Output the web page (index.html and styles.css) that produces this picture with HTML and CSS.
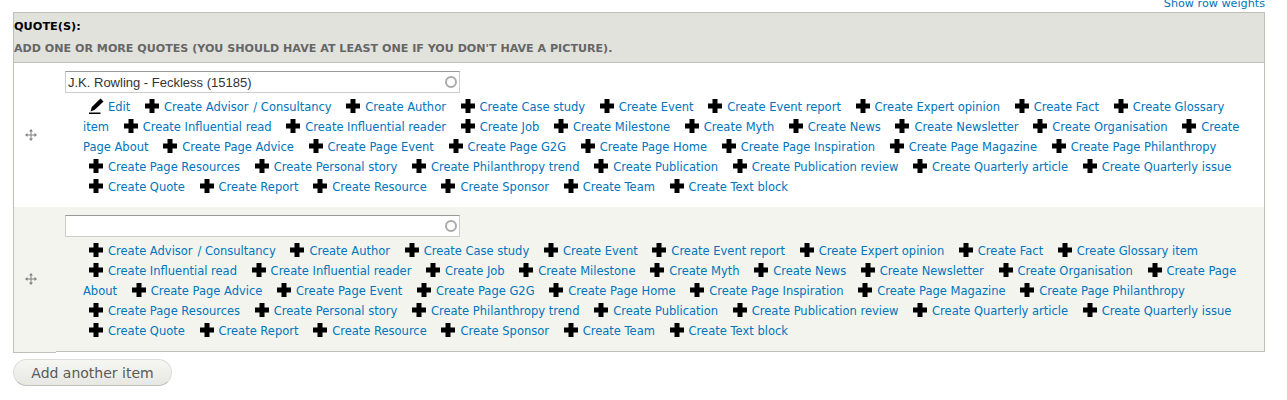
FILE: index.html
```html
<!DOCTYPE html>
<html lang="en">
<head>
<meta charset="utf-8">
<title>Quotes</title>
<link rel="stylesheet" href="styles.css">
</head>
<body>
<svg class="defs" width="0" height="0" aria-hidden="true">
  <symbol id="plus" viewBox="0 0 14 14"><path d="M4.500 0h5v4.500H14v5H9.500V14h-5V9.500H0v-5h4.500z"/></symbol>
  <symbol id="pencil" viewBox="0 0 15 16"><path d="M11.500 0.500 14.500 3.500 5.500 12 1.500 13.500 2.800 9z"/><path d="M0 14.500h11.500V16H0z"/></symbol>
  <symbol id="move" viewBox="0 0 12 12"><path d="M5.500 2.500h1v3h3V4L12 6 9.500 8V6.500h-3v3H8L6 12 4 9.500h1.500v-3h-3V8L0 6l2.500-2v1.500h3v-3H4L6 0l2 2.500z"/></symbol>
</svg>
<div class="weights"><a href="#">Show row weights</a></div>
<div class="table">
  <div class="head">
    <div class="title">Quote(s):</div>
    <div class="desc">Add one or more quotes (you should have at least one if you don't have a picture).</div>
  </div>
  <div class="row">
    <div class="handle"><svg class="move"><use href="#move"/></svg></div>
    <div class="cell">
      <div class="field">J.K. Rowling - Feckless (15185)<span class="throbber"></span></div>
      <div class="links">
        <a href="#"><span class="i"><svg class="ico pen"><use href="#pencil"/></svg>Edit</span></a>
        <a href="#"><span class="i"><svg class="ico"><use href="#plus"/></svg>Create</span> Advisor&#8202; / Consultancy</a>
        <a href="#"><span class="i"><svg class="ico"><use href="#plus"/></svg>Create</span> Author</a>
        <a href="#"><span class="i"><svg class="ico"><use href="#plus"/></svg>Create</span> Case study</a>
        <a href="#"><span class="i"><svg class="ico"><use href="#plus"/></svg>Create</span> Event</a>
        <a href="#"><span class="i"><svg class="ico"><use href="#plus"/></svg>Create</span> Event report</a>
        <a href="#"><span class="i"><svg class="ico"><use href="#plus"/></svg>Create</span> Expert opinion</a>
        <a href="#"><span class="i"><svg class="ico"><use href="#plus"/></svg>Create</span> Fact</a>
        <a href="#"><span class="i"><svg class="ico"><use href="#plus"/></svg>Create</span> Glossary item</a>
        <a href="#"><span class="i"><svg class="ico"><use href="#plus"/></svg>Create</span> Influential read</a>
        <a href="#"><span class="i"><svg class="ico"><use href="#plus"/></svg>Create</span> Influential reader</a>
        <a href="#"><span class="i"><svg class="ico"><use href="#plus"/></svg>Create</span> Job</a>
        <a href="#"><span class="i"><svg class="ico"><use href="#plus"/></svg>Create</span> Milestone</a>
        <a href="#"><span class="i"><svg class="ico"><use href="#plus"/></svg>Create</span> Myth</a>
        <a href="#"><span class="i"><svg class="ico"><use href="#plus"/></svg>Create</span> News</a>
        <a href="#"><span class="i"><svg class="ico"><use href="#plus"/></svg>Create</span> Newsletter</a>
        <a href="#"><span class="i"><svg class="ico"><use href="#plus"/></svg>Create</span> Organisation</a>
        <a href="#"><span class="i"><svg class="ico"><use href="#plus"/></svg>Create</span> Page About</a>
        <a href="#"><span class="i"><svg class="ico"><use href="#plus"/></svg>Create</span> Page Advice</a>
        <a href="#"><span class="i"><svg class="ico"><use href="#plus"/></svg>Create</span> Page Event</a>
        <a href="#"><span class="i"><svg class="ico"><use href="#plus"/></svg>Create</span> Page G2G</a>
        <a href="#"><span class="i"><svg class="ico"><use href="#plus"/></svg>Create</span> Page Home</a>
        <a href="#"><span class="i"><svg class="ico"><use href="#plus"/></svg>Create</span> Page Inspiration</a>
        <a href="#"><span class="i"><svg class="ico"><use href="#plus"/></svg>Create</span> Page Magazine</a>
        <a href="#"><span class="i"><svg class="ico"><use href="#plus"/></svg>Create</span> Page Philanthropy</a>
        <a href="#"><span class="i"><svg class="ico"><use href="#plus"/></svg>Create</span> Page Resources</a>
        <a href="#"><span class="i"><svg class="ico"><use href="#plus"/></svg>Create</span> Personal story</a>
        <a href="#"><span class="i"><svg class="ico"><use href="#plus"/></svg>Create</span> Philanthropy trend</a>
        <a href="#"><span class="i"><svg class="ico"><use href="#plus"/></svg>Create</span> Publication</a>
        <a href="#"><span class="i"><svg class="ico"><use href="#plus"/></svg>Create</span> Publication review</a>
        <a href="#"><span class="i"><svg class="ico"><use href="#plus"/></svg>Create</span> Quarterly article</a>
        <a href="#"><span class="i"><svg class="ico"><use href="#plus"/></svg>Create</span> Quarterly issue</a>
        <a href="#"><span class="i"><svg class="ico"><use href="#plus"/></svg>Create</span> Quote</a>
        <a href="#"><span class="i"><svg class="ico"><use href="#plus"/></svg>Create</span> Report</a>
        <a href="#"><span class="i"><svg class="ico"><use href="#plus"/></svg>Create</span> Resource</a>
        <a href="#"><span class="i"><svg class="ico"><use href="#plus"/></svg>Create</span> Sponsor</a>
        <a href="#"><span class="i"><svg class="ico"><use href="#plus"/></svg>Create</span> Team</a>
        <a href="#"><span class="i"><svg class="ico"><use href="#plus"/></svg>Create</span> Text block</a>
      </div>
    </div>
  </div>
  <div class="row even">
    <div class="handle"><svg class="move"><use href="#move"/></svg></div>
    <div class="cell">
      <div class="field"><span class="throbber"></span></div>
      <div class="links">
        <a href="#"><span class="i"><svg class="ico"><use href="#plus"/></svg>Create</span> Advisor&#8202; / Consultancy</a>
        <a href="#"><span class="i"><svg class="ico"><use href="#plus"/></svg>Create</span> Author</a>
        <a href="#"><span class="i"><svg class="ico"><use href="#plus"/></svg>Create</span> Case study</a>
        <a href="#"><span class="i"><svg class="ico"><use href="#plus"/></svg>Create</span> Event</a>
        <a href="#"><span class="i"><svg class="ico"><use href="#plus"/></svg>Create</span> Event report</a>
        <a href="#"><span class="i"><svg class="ico"><use href="#plus"/></svg>Create</span> Expert opinion</a>
        <a href="#"><span class="i"><svg class="ico"><use href="#plus"/></svg>Create</span> Fact</a>
        <a href="#"><span class="i"><svg class="ico"><use href="#plus"/></svg>Create</span> Glossary item</a>
        <a href="#"><span class="i"><svg class="ico"><use href="#plus"/></svg>Create</span> Influential read</a>
        <a href="#"><span class="i"><svg class="ico"><use href="#plus"/></svg>Create</span> Influential reader</a>
        <a href="#"><span class="i"><svg class="ico"><use href="#plus"/></svg>Create</span> Job</a>
        <a href="#"><span class="i"><svg class="ico"><use href="#plus"/></svg>Create</span> Milestone</a>
        <a href="#"><span class="i"><svg class="ico"><use href="#plus"/></svg>Create</span> Myth</a>
        <a href="#"><span class="i"><svg class="ico"><use href="#plus"/></svg>Create</span> News</a>
        <a href="#"><span class="i"><svg class="ico"><use href="#plus"/></svg>Create</span> Newsletter</a>
        <a href="#"><span class="i"><svg class="ico"><use href="#plus"/></svg>Create</span> Organisation</a>
        <a href="#"><span class="i"><svg class="ico"><use href="#plus"/></svg>Create</span> Page About</a>
        <a href="#"><span class="i"><svg class="ico"><use href="#plus"/></svg>Create</span> Page Advice</a>
        <a href="#"><span class="i"><svg class="ico"><use href="#plus"/></svg>Create</span> Page Event</a>
        <a href="#"><span class="i"><svg class="ico"><use href="#plus"/></svg>Create</span> Page G2G</a>
        <a href="#"><span class="i"><svg class="ico"><use href="#plus"/></svg>Create</span> Page Home</a>
        <a href="#"><span class="i"><svg class="ico"><use href="#plus"/></svg>Create</span> Page Inspiration</a>
        <a href="#"><span class="i"><svg class="ico"><use href="#plus"/></svg>Create</span> Page Magazine</a>
        <a href="#"><span class="i"><svg class="ico"><use href="#plus"/></svg>Create</span> Page Philanthropy</a>
        <a href="#"><span class="i"><svg class="ico"><use href="#plus"/></svg>Create</span> Page Resources</a>
        <a href="#"><span class="i"><svg class="ico"><use href="#plus"/></svg>Create</span> Personal story</a>
        <a href="#"><span class="i"><svg class="ico"><use href="#plus"/></svg>Create</span> Philanthropy trend</a>
        <a href="#"><span class="i"><svg class="ico"><use href="#plus"/></svg>Create</span> Publication</a>
        <a href="#"><span class="i"><svg class="ico"><use href="#plus"/></svg>Create</span> Publication review</a>
        <a href="#"><span class="i"><svg class="ico"><use href="#plus"/></svg>Create</span> Quarterly article</a>
        <a href="#"><span class="i"><svg class="ico"><use href="#plus"/></svg>Create</span> Quarterly issue</a>
        <a href="#"><span class="i"><svg class="ico"><use href="#plus"/></svg>Create</span> Quote</a>
        <a href="#"><span class="i"><svg class="ico"><use href="#plus"/></svg>Create</span> Report</a>
        <a href="#"><span class="i"><svg class="ico"><use href="#plus"/></svg>Create</span> Resource</a>
        <a href="#"><span class="i"><svg class="ico"><use href="#plus"/></svg>Create</span> Sponsor</a>
        <a href="#"><span class="i"><svg class="ico"><use href="#plus"/></svg>Create</span> Team</a>
        <a href="#"><span class="i"><svg class="ico"><use href="#plus"/></svg>Create</span> Text block</a>
      </div>
    </div>
  </div>
</div>
<button class="add" type="button">Add another item</button>
</body>
</html>
```
FILE: styles.css
```css
* { box-sizing: border-box; }
html, body { background: #fff; }
body {
  margin: 0;
  padding: 0 22px 0 13px;
  font-family: "DejaVu Sans", Verdana, sans-serif;
  font-size: 11.5px;
  color: #333;
  overflow: hidden;
}
.defs { position: absolute; }
a { color: #0074bd; text-decoration: none; }
.weights {
  height: 12px;
  text-align: right;
  font-size: 11.2px;
  line-height: 7px;
  overflow: hidden;
}
.table {
  position: relative;
  border: 1px solid #bebfb9;
  background: #fff;
}
.table::after {
  content: "";
  position: absolute;
  left: -1px;
  bottom: -2px;
  width: 42px;
  height: 2px;
  background: #f3f4ee;
  border-left: 1px solid #bebfb9;
  border-bottom: 1px solid #bebfb9;
}
.head {
  height: 50px;
  padding: 7px 0 0 0;
  background: #e1e2dc;
  border-bottom: 1px solid #bebfb9;
  text-transform: uppercase;
  font-weight: bold;
}
.title { color: #000; line-height: 14px; font-size: 11.3px; }
.desc { color: #666; line-height: 14px; margin-top: 8px; font-size: 11.1px; }
.row { display: flex; height: 144px; }
.row.even { background: #f3f4ee; }
.handle {
  width: 51px;
  flex: none;
  display: flex;
  align-items: center;
  padding-left: 11px;
}
.move { width: 12px; height: 12px; fill: #808080; }
.cell { flex: 1; padding: 8px 13px 0 0; min-width: 0; }
.field {
  position: relative;
  width: 395px;
  height: 22px;
  border: 1px solid #ccc;
  border-top-color: #999;
  background: #fff;
  padding-left: 2px;
  font-family: "Liberation Sans", Arial, sans-serif;
  font-size: 13px;
  line-height: 21px;
  color: #333;
}
.throbber {
  position: absolute;
  top: 4px;
  right: 2px;
  width: 12px;
  height: 12px;
  border: 2px solid #aaa;
  border-radius: 50%;
}
.links { margin: 4px 0 0 18px; line-height: 20px; }
.links a { margin-left: 6px; margin-right: 5px; }
.i { white-space: nowrap; }
.ico {
  width: 14px;
  height: 14px;
  margin-right: 5px;
  vertical-align: -2px;
  fill: #000;
}
.ico.pen { width: 15px; height: 16px; margin-right: 4px; vertical-align: -3px; }
.add {
  display: block;
  width: 159px;
  height: 27px;
  margin-top: 7px;
  border: 1px solid #dcdcd8;
  border-bottom-color: #bebfb9;
  border-radius: 14px;
  background: linear-gradient(#f6f6f3, #e7e7e3);
  color: #5a5a5a;
  font-family: "DejaVu Sans", Verdana, sans-serif;
  font-size: 14px;
  padding: 0;
}
```
